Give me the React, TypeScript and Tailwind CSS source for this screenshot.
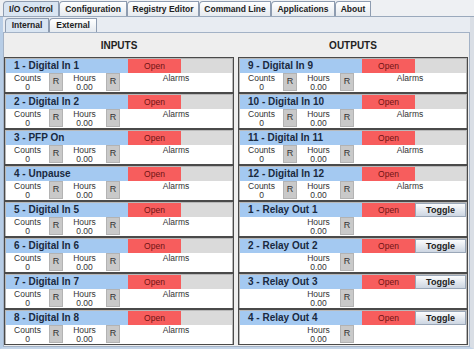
import React from 'react';

const tabs = [
  { label: 'I/O Control', w: 'w-[56px]', active: true },
  { label: 'Configuration', w: 'w-[68px]' },
  { label: 'Registry Editor', w: 'w-[72px]' },
  { label: 'Command Line', w: 'w-[72px]' },
  { label: 'Applications', w: 'w-[64px]' },
  { label: 'About', w: 'w-[36px]' },
];

const inputs = [
  '1 - Digital In 1',
  '2 - Digital In 2',
  '3 - PFP On',
  '4 - Unpause',
  '5 - Digital In 5',
  '6 - Digital In 6',
  '7 - Digital In 7',
  '8 - Digital In 8',
];

const outputs = [
  { name: '9 - Digital In 9', relay: false },
  { name: '10 - Digital In 10', relay: false },
  { name: '11 - Digital In 11', relay: false },
  { name: '12 - Digital In 12', relay: false },
  { name: '1 - Relay Out 1', relay: true },
  { name: '2 - Relay Out 2', relay: true },
  { name: '3 - Relay Out 3', relay: true },
  { name: '4 - Relay Out 4', relay: true },
];

function ResetButton() {
  return (
    <div className="w-[14px] h-[18px] bg-[#c9c9c9] border border-[#b3b3b3] flex items-center justify-center text-[9px] text-[#333]">
      R
    </div>
  );
}

function Stat({ label, value }: { label: string; value: string }) {
  return (
    <div className="w-[43px] flex flex-col items-center pt-px text-[8.5px] leading-[9px] text-[#333]">
      <span>{label}</span>
      <span>{value}</span>
    </div>
  );
}

function IoCard({ name, relay = false }: { name: string; relay?: boolean }) {
  return (
    <div className="h-[36px] border border-[#4a4a4a]">
      <div className="h-full border border-[#b8b8b8] flex flex-col">
        <div className="h-[14px] flex">
          <div className="flex-1 bg-[#a4c9f1] pl-[8px] text-[10px] font-bold leading-[14px] text-[#1a2940]">
            {name}
          </div>
          <div className="w-[53px] bg-[#f75d5d] text-center text-[8.5px] leading-[14px] text-[#6e1414]">Open</div>
          {relay ? (
            <div className="w-[51px] bg-gradient-to-b from-[#fbfcfd] to-[#cdd6e2] border border-[#9aa7b8] text-center text-[9px] font-bold leading-[12px] text-[#222]">
              Toggle
            </div>
          ) : (
            <div className="w-[51px] bg-[#dadada]" />
          )}
        </div>
        <div className="flex-1 bg-white flex">
          {relay ? <div className="w-[57px]" /> : (
            <>
              <Stat label="Counts" value="0" />
              <ResetButton />
            </>
          )}
          <Stat label="Hours" value="0.00" />
          <ResetButton />
          {!relay && (
            <div className="flex-1 text-center pt-px text-[8.5px] leading-[9px] text-[#333]">Alarms</div>
          )}
        </div>
      </div>
    </div>
  );
}

export default function App() {
  return (
    <div className="w-[474px] h-[349px] overflow-hidden flex flex-col bg-[#eef0f3] font-['Liberation_Sans',Arial,sans-serif]">
      <div className="h-[17px] flex items-end pl-[3px] border-b border-[#9aa9bc]">
        {tabs.map((t) => (
          <div
            key={t.label}
            className={`${t.w} h-[15px] border border-b-0 border-[#8e9cb0] rounded-tl-[4px] text-center text-[8.5px] font-bold leading-[14px] text-[#222] ${
              t.active ? 'bg-[#d9e5f2]' : 'bg-gradient-to-b from-white to-[#e6eaef]'
            }`}
          >
            {t.label}
          </div>
        ))}
      </div>
      <div className="flex-1 flex flex-col border-l-[3px] border-l-[#b7cde6] border-r-[4px] border-r-[#d9dee5] border-b-[2px] border-b-[#c3d4e8] bg-[#e8ecf2]">
        <div className="h-[15px] flex items-end pl-[2px]">
          <div className="w-[44px] h-[14px] border border-b-0 border-[#8e9cb0] rounded-tl-[4px] bg-[#d9e5f2] text-center text-[8.5px] font-bold leading-[13px] text-[#222]">
            Internal
          </div>
          <div className="w-[48px] h-[14px] border border-b-0 border-[#8e9cb0] rounded-tl-[4px] bg-gradient-to-b from-white to-[#e6eaef] text-center text-[8.5px] font-bold leading-[13px] text-[#222]">
            External
          </div>
        </div>
        <div className="flex-1 border border-[#a3b2c6] bg-[#eeeeee] pb-px pr-px grid grid-cols-[230px_230px] gap-x-[4px] content-start">
          <div className="flex flex-col">
            <div className="h-[24px] pt-[3px] text-center text-[10px] font-bold leading-[20px] text-[#222]">INPUTS</div>
            {inputs.map((n) => (
              <IoCard key={n} name={n} />
            ))}
          </div>
          <div className="flex flex-col">
            <div className="h-[24px] pt-[3px] text-center text-[10px] font-bold leading-[20px] text-[#222]">OUTPUTS</div>
            {outputs.map((o) => (
              <IoCard key={o.name} name={o.name} relay={o.relay} />
            ))}
          </div>
        </div>
      </div>
    </div>
  );
}
